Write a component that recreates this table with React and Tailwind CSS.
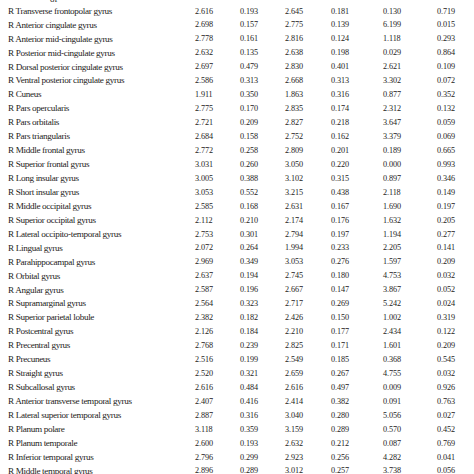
const rows = [
  ['R Transverse frontopolar gyrus', '2.616', '0.193', '2.645', '0.181', '0.130', '0.719'],
  ['R Anterior cingulate gyrus', '2.698', '0.157', '2.775', '0.139', '6.199', '0.015'],
  ['R Anterior mid-cingulate gyrus', '2.778', '0.161', '2.816', '0.124', '1.118', '0.293'],
  ['R Posterior mid-cingulate gyrus', '2.632', '0.135', '2.638', '0.198', '0.029', '0.864'],
  ['R Dorsal posterior cingulate gyrus', '2.697', '0.479', '2.830', '0.401', '2.621', '0.109'],
  ['R Ventral posterior cingulate gyrus', '2.586', '0.313', '2.668', '0.313', '3.302', '0.072'],
  ['R Cuneus', '1.911', '0.350', '1.863', '0.316', '0.877', '0.352'],
  ['R Pars opercularis', '2.775', '0.170', '2.835', '0.174', '2.312', '0.132'],
  ['R Pars orbitalis', '2.721', '0.209', '2.827', '0.218', '3.647', '0.059'],
  ['R Pars triangularis', '2.684', '0.158', '2.752', '0.162', '3.379', '0.069'],
  ['R Middle frontal gyrus', '2.772', '0.258', '2.809', '0.201', '0.189', '0.665'],
  ['R Superior frontal gyrus', '3.031', '0.260', '3.050', '0.220', '0.000', '0.993'],
  ['R Long insular gyrus', '3.005', '0.388', '3.102', '0.315', '0.897', '0.346'],
  ['R Short insular gyrus', '3.053', '0.552', '3.215', '0.438', '2.118', '0.149'],
  ['R Middle occipital gyrus', '2.585', '0.168', '2.631', '0.167', '1.690', '0.197'],
  ['R Superior occipital gyrus', '2.112', '0.210', '2.174', '0.176', '1.632', '0.205'],
  ['R Lateral occipito-temporal gyrus', '2.753', '0.301', '2.794', '0.197', '1.194', '0.277'],
  ['R Lingual gyrus', '2.072', '0.264', '1.994', '0.233', '2.205', '0.141'],
  ['R Parahippocampal gyrus', '2.969', '0.349', '3.053', '0.276', '1.597', '0.209'],
  ['R Orbital gyrus', '2.637', '0.194', '2.745', '0.180', '4.753', '0.032'],
  ['R Angular gyrus', '2.587', '0.196', '2.667', '0.147', '3.867', '0.052'],
  ['R Supramarginal gyrus', '2.564', '0.323', '2.717', '0.269', '5.242', '0.024'],
  ['R Superior parietal lobule', '2.382', '0.182', '2.426', '0.150', '1.002', '0.319'],
  ['R Postcentral gyrus', '2.126', '0.184', '2.210', '0.177', '2.434', '0.122'],
  ['R Precentral gyrus', '2.768', '0.239', '2.825', '0.171', '1.601', '0.209'],
  ['R Precuneus', '2.516', '0.199', '2.549', '0.185', '0.368', '0.545'],
  ['R Straight gyrus', '2.520', '0.321', '2.659', '0.267', '4.755', '0.032'],
  ['R Subcallosal gyrus', '2.616', '0.484', '2.616', '0.497', '0.009', '0.926'],
  ['R Anterior transverse temporal gyrus', '2.407', '0.416', '2.414', '0.382', '0.091', '0.763'],
  ['R Lateral superior temporal gyrus', '2.887', '0.316', '3.040', '0.280', '5.056', '0.027'],
  ['R Planum polare', '3.118', '0.359', '3.159', '0.289', '0.570', '0.452'],
  ['R Planum temporale', '2.600', '0.193', '2.632', '0.212', '0.087', '0.769'],
  ['R Inferior temporal gyrus', '2.796', '0.299', '2.923', '0.256', '4.282', '0.041'],
  ['R Middle temporal gyrus', '2.896', '0.289', '3.012', '0.257', '3.738', '0.056'],
];

const colW = ['w-[45px]', 'w-[45px]', 'w-[46px]', 'w-[52px]', 'w-[54px]', 'w-[37px]'];

export default function App() {
  return (
    <div className="w-[474px] h-[474px] overflow-hidden bg-white text-[#1e1c1b] font-['Liberation_Serif',serif]">
      <div className="-mt-[6px] h-[10.7px] leading-[10.7px] pl-[50px] text-[9px]">of</div>
      <div className="flex flex-col">
        {rows.map((r) => (
          <div key={r[0]} className="flex items-center h-[13.94px] pl-[8px] whitespace-nowrap">
            <div className="w-[187px] text-[9.2px] tracking-[-0.35px]">{r[0]}</div>
            {r.slice(1).map((v, i) => (
              <div key={i} className={`${colW[i]} text-[8.2px] tracking-[-0.1px]`}>{v}</div>
            ))}
          </div>
        ))}
      </div>
    </div>
  );
}
